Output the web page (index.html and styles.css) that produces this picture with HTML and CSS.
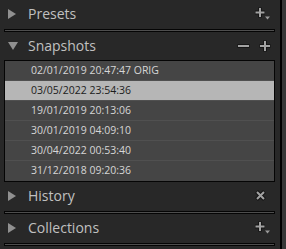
FILE: index.html
```html
<!DOCTYPE html>
<html lang="en">
<head>
  <meta charset="UTF-8">
  <title>Snapshots</title>
  <link rel="stylesheet" href="styles.css">
</head>
<body>
  <div class="wrap">
    <div class="panel">
      <div class="section">
        <div class="head">
          <span class="tri"></span>
          <span class="title">Presets</span>
          <span class="tools">
            <svg width="16" height="14" viewBox="0 0 16 14">
              <path d="M5 0.5v10M0 5.5h10" stroke="#151515" stroke-width="4"/>
              <path d="M5 1v9M0.5 5.5h9" stroke="#a2a2a2" stroke-width="2"/>
              <path d="M10 9.5h5l-2.5 3z" fill="#9a9a9a"/>
            </svg>
          </span>
        </div>
        <div class="box"></div>
      </div>

      <div class="section">
        <div class="head">
          <span class="tri down"></span>
          <span class="title">Snapshots</span>
          <span class="tools">
            <svg width="34" height="12" viewBox="0 0 34 12">
              <path d="M0.5 6h12" stroke="#151515" stroke-width="4"/>
              <path d="M1 6h11" stroke="#a2a2a2" stroke-width="2"/>
              <path d="M28 0.5v11M22.5 6h11" stroke="#151515" stroke-width="4"/>
              <path d="M28 1v10M23 6h10" stroke="#a2a2a2" stroke-width="2"/>
            </svg>
          </span>
        </div>
        <div class="list">
          <div class="row">02/01/2019 20:47:47 ORIG</div>
          <div class="row selected">03/05/2022 23:54:36</div>
          <div class="row">19/01/2019 20:13:06</div>
          <div class="row">30/01/2019 04:09:10</div>
          <div class="row">30/04/2022 00:53:40</div>
          <div class="row">31/12/2018 09:20:36</div>
        </div>
      </div>

      <div class="section">
        <div class="head">
          <span class="tri"></span>
          <span class="title">History</span>
          <span class="tools">
            <svg width="16" height="12" viewBox="0 0 16 12">
              <path d="M1.5 1.5l8 8M9.5 1.5l-8 8" stroke="#151515" stroke-width="4"/>
              <path d="M2 2l7 7M9 2l-7 7" stroke="#a2a2a2" stroke-width="2"/>
            </svg>
          </span>
        </div>
        <div class="box"></div>
      </div>

      <div class="section">
        <div class="head">
          <span class="tri"></span>
          <span class="title">Collections</span>
          <span class="tools">
            <svg width="16" height="14" viewBox="0 0 16 14">
              <path d="M5 0.5v10M0 5.5h10" stroke="#151515" stroke-width="4"/>
              <path d="M5 1v9M0.5 5.5h9" stroke="#a2a2a2" stroke-width="2"/>
              <path d="M10 9.5h5l-2.5 3z" fill="#9a9a9a"/>
            </svg>
          </span>
        </div>
        <div class="box"></div>
      </div>
    </div>
    <div class="edge"></div>
    <div class="scroll"></div>
  </div>
</body>
</html>
```

FILE: styles.css
```css
* { box-sizing: border-box; }
html, body {
  margin: 0;
  height: 100%;
  background: #282828;
}
body {
  font-family: "Open Sans", sans-serif;
  overflow: hidden;
}
.wrap {
  display: flex;
  height: 100%;
}
.panel {
  width: 280px;
  padding: 0 5px 0 4px;
  background: #282828;
}
.edge {
  width: 2px;
  background: #000;
}
.scroll {
  flex: 1;
  background: #383838;
}
.head {
  display: flex;
  align-items: center;
  height: 28px;
  padding-left: 4px;
}
.tri {
  width: 0;
  height: 0;
  border-top: 5px solid transparent;
  border-bottom: 5px solid transparent;
  border-left: 8px solid #909090;
  margin-right: 12px;
}
.tri.down {
  border-left: 5px solid transparent;
  border-right: 5px solid transparent;
  border-top: 8px solid #909090;
  border-bottom: 0;
  margin-right: 10px;
}
.title {
  flex: 1;
  font-size: 14px;
  color: #c0c0c0;
  padding-bottom: 1px;
}
.tools {
  display: flex;
  align-items: center;
  margin-right: 4px;
}
.tools svg { display: block; }
.box {
  height: 3px;
  margin-top: 1px;
  border: 1px solid #050505;
  background: #4e4e4e;
}
.list {
  border: 1px solid #050505;
  background: #454545;
}
.row {
  height: 20px;
  line-height: 19px;
  padding-left: 26px;
  font-size: 10.5px;
  color: #d6d6d6;
  border-bottom: 1px solid #505050;
}
.row:last-child { border-bottom: 0; }
.row.selected {
  background: #b6b6b6;
  color: #1c1c1c;
}
```
